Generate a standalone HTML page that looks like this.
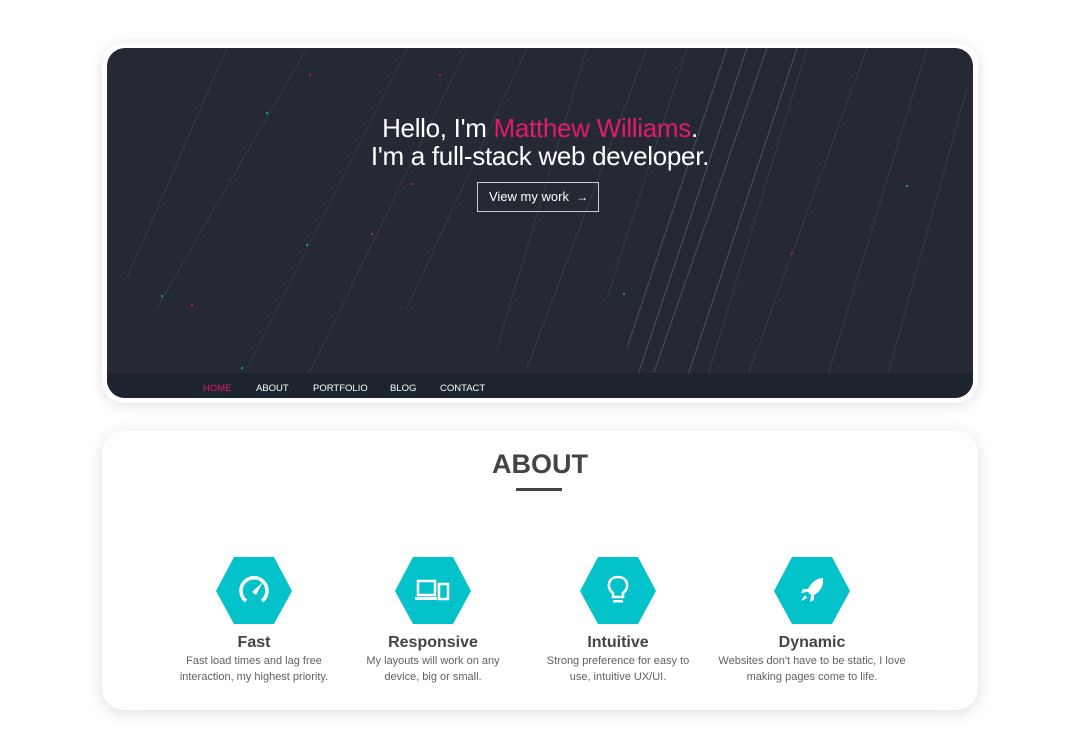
<!DOCTYPE html>
<html><head><meta charset="utf-8"><style>
*{margin:0;padding:0;box-sizing:border-box}
body{width:1080px;height:753px;background:#fff;font-family:"Liberation Sans",sans-serif;position:relative;overflow:hidden}
.c1{position:absolute;left:102px;top:43px;width:876px;height:360px;background:#fff;border-radius:22px;box-shadow:0 2px 14px rgba(0,0,0,.12)}
.dark{position:absolute;left:5px;top:5px;width:866px;height:350px;background:#252934;border-radius:18px;overflow:hidden}
.nav{position:absolute;left:0;bottom:0;width:100%;height:25px;background:#1b242f;font-size:9.5px;color:#fff}
.nav span{position:absolute;top:10px}
.h{position:absolute;left:0;width:100%;text-align:center;color:#fff;font-size:26px;line-height:28px;letter-spacing:-0.3px}
.btn{position:absolute;left:370px;top:134px;width:122px;height:30px;border:1.5px solid #ccc;color:#fff;font-size:13px;line-height:27px;padding-left:11px}
.c2{position:absolute;left:102px;top:431px;width:876px;height:279px;background:#fff;border-radius:22px;box-shadow:0 3px 16px rgba(0,0,0,.13)}
.ab{position:absolute;left:0;width:100%;top:18px;text-align:center;font-size:27px;font-weight:bold;color:#444}
.ul{position:absolute;left:414px;top:57px;width:46px;height:3px;background:#444}
.f{position:absolute;top:126px;width:220px;text-align:center}
.f svg{display:block;margin:0 auto}
.t{font-size:16px;font-weight:bold;color:#444;margin-top:9px;line-height:20px}
.d{font-size:11px;color:#616161;line-height:16px;margin-top:0}
</style></head><body>
<div class="c1"><div class="dark">
<svg width="866" height="350" style="position:absolute;left:0;top:0" stroke-width="0.7">
<g stroke="#3e4350">
<line x1="200" y1="0" x2="50" y2="260"/><line x1="300" y1="0" x2="140" y2="320"/>
<line x1="360" y1="0" x2="200" y2="330"/><line x1="420" y1="0" x2="300" y2="260"/>
<line x1="480" y1="0" x2="390" y2="300"/><line x1="540" y1="0" x2="420" y2="320"/>
<line x1="700" y1="0" x2="600" y2="330"/><line x1="760" y1="0" x2="640" y2="330"/>
<line x1="820" y1="0" x2="720" y2="330"/><line x1="860" y1="40" x2="780" y2="330"/>
<line x1="120" y1="0" x2="20" y2="230"/><line x1="580" y1="0" x2="500" y2="250"/>
</g>
<g stroke="#5d616b">
<line x1="640" y1="0" x2="530" y2="330"/><line x1="660" y1="0" x2="545" y2="330"/>
<line x1="690" y1="0" x2="580" y2="330"/><line x1="620" y1="0" x2="520" y2="300"/>
</g>
<g fill="#04c2c9"><circle cx="55" cy="248" r="1"/><circle cx="200" cy="197" r="1"/><circle cx="160" cy="65" r="1"/><circle cx="800" cy="138" r="1"/><circle cx="517" cy="246" r="1"/><circle cx="135" cy="320" r="1"/></g>
<g fill="#e31b6d"><circle cx="203" cy="27" r="1"/><circle cx="333" cy="27" r="1"/><circle cx="265" cy="186" r="1"/><circle cx="85" cy="257" r="1"/><circle cx="305" cy="136" r="1"/><circle cx="685" cy="205" r="1"/></g>
</svg>
<div class="h" style="top:66px">Hello, I'm <span style="color:#e31b6d">Matthew Williams</span>.</div>
<div class="h" style="top:94px">I'm a full-stack web developer.</div>
<div class="btn">View my work &nbsp;<span style="font-size:12px">&#8594;</span></div>
<div class="nav"><span style="left:96px;color:#e31b6d">HOME</span><span style="left:149px">ABOUT</span><span style="left:206px">PORTFOLIO</span><span style="left:283px">BLOG</span><span style="left:333px">CONTACT</span></div>
</div></div>
<div class="c2">
<div class="ab">ABOUT</div><div class="ul"></div>
<div class="f" style="left:42px"><svg width="76" height="67" viewBox="0 0 76 67"><polygon points="0,34 18,0 58,0 76,34 58,67 18,67" fill="#04c2c9"/><g fill="none" stroke="#fff" stroke-width="3.5"><path d="M30 44 A13 13 0 1 1 46 44"/></g><path d="M36 35 L47 25 L40 38 Z" fill="#fff"/></svg><div class="t">Fast</div><div class="d">Fast load times and lag free<br>interaction, my highest priority.</div></div>
<div class="f" style="left:221px"><svg width="76" height="67" viewBox="0 0 76 67"><polygon points="0,34 18,0 58,0 76,34 58,67 18,67" fill="#04c2c9"/><g fill="none" stroke="#fff" stroke-width="2.5"><rect x="23" y="24" width="17" height="14"/><rect x="44" y="27" width="9" height="15"/></g><rect x="20" y="40" width="22" height="3" fill="#fff"/></svg><div class="t">Responsive</div><div class="d">My layouts will work on any<br>device, big or small.</div></div>
<div class="f" style="left:406px"><svg width="76" height="67" viewBox="0 0 76 67"><polygon points="0,34 18,0 58,0 76,34 58,67 18,67" fill="#04c2c9"/><path d="M33 40 L33 36 C26 31 28 20 38 20 C48 20 50 31 43 36 L43 40 Z" fill="none" stroke="#fff" stroke-width="2.5"/><rect x="33" y="43" width="10" height="2.5" fill="#fff"/></svg><div class="t">Intuitive</div><div class="d">Strong preference for easy to<br>use, intuitive UX/UI.</div></div>
<div class="f" style="left:600px"><svg width="76" height="67" viewBox="0 0 76 67"><polygon points="0,34 18,0 58,0 76,34 58,67 18,67" fill="#04c2c9"/><path d="M49 21 C42 21 36 27 33 34 L38 39 C45 36 50 30 49 21 Z" fill="#fff"/><path d="M34 32 L29 32 L27 36 L33 35 Z M40 38 L40 43 L36 45 L37 39 Z M31 38 L27 44 L33 41 Z" fill="#fff"/></svg><div class="t">Dynamic</div><div class="d">Websites don't have to be static, I love<br>making pages come to life.</div></div>
</div>
</body></html>
